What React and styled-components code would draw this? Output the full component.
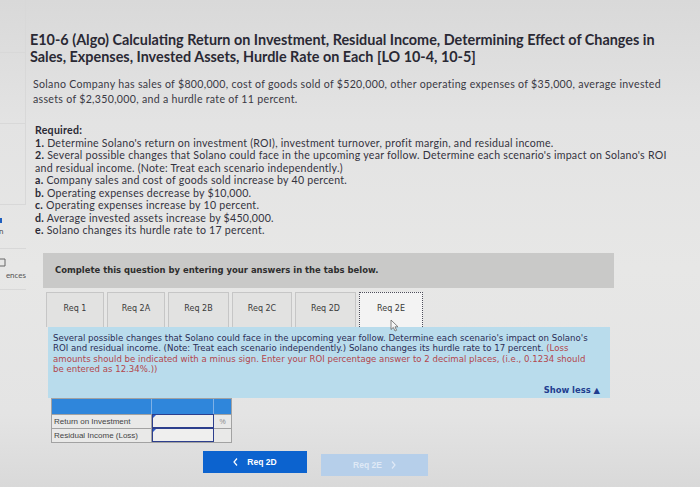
import styled, { createGlobalStyle, css } from 'styled-components';

const GlobalStyle = createGlobalStyle`
	html, body {
		margin: 0;
		padding: 0;
		background: #e2e2e2;
	}
	body {
		font-family: 'Lato', 'Liberation Sans', sans-serif;
	}
`;

const Page = styled.div`
	width: 700px;
	height: 487px;
	overflow: hidden;
	display: flex;
	background: linear-gradient(180deg, #d9d9d9 0%, #e3e3e3 25%, #e7e7e6 55%, #e4e4e4 85%, #d9d9d9 100%);
`;

const Sidebar = styled.div`
	width: 26px;
	flex-shrink: 0;
	display: flex;
	flex-direction: column;
`;

const SideCell = styled.div`
	height: ${(props) => props.h}px;
	border-bottom: 1px solid #d8d8d8;
	display: flex;
	flex-direction: column;
	align-items: flex-end;
	justify-content: center;
	gap: 3px;
	overflow: hidden;
	font-family: 'Lato', sans-serif;
	font-size: 8px;
	color: #555;
	white-space: nowrap;
	${(props) =>
		props.edge &&
		css`
			border-right: 1px solid #d8d8d8;
		`}
`;

const SideMark = styled.span`
	align-self: flex-start;
	width: 2px;
	height: 5px;
	background: #1f5fbf;
`;

const SideLabel = styled.span`
	align-self: flex-start;
	margin-left: -1px;
`;

const Main = styled.div`
	flex: 1;
	padding: 31px 0 0 4px;
	color: #2c2b36;
`;

const Title = styled.h1`
	margin: 0;
	font-family: 'Lato', sans-serif;
	font-weight: 700;
	font-size: 14.4px;
	line-height: 17px;
	color: #2a2934;
	white-space: nowrap;
`;

const Intro = styled.p`
	margin: 12px 0 0 3px;
	font-size: 10.6px;
	letter-spacing: 0.3px;
	line-height: 15px;
	color: #3a3944;
	white-space: nowrap;
`;

const Required = styled.div`
	margin: 17px 0 0 5px;
	font-size: 10.6px;
	letter-spacing: 0.25px;
	line-height: 12.5px;
	color: #34333e;
	white-space: nowrap;
`;

const Strong = styled.b`
	font-weight: 700;
	color: #2a2934;
`;

const Question = styled.div`
	margin: 16px 0 0 13px;
	width: 571px;
	font-family: 'DejaVu Sans', Verdana, sans-serif;
`;

const Instruction = styled.div`
	height: 35px;
	background: #c9c9c8;
	display: flex;
	align-items: center;
	padding-left: 12px;
	font-size: 8.45px;
	font-weight: 700;
	color: #2e2e2e;
`;

const Tabs = styled.div`
	margin-top: 4px;
	padding-left: 3px;
	display: flex;
	gap: 3px;
	height: 35px;
`;

const Tab = styled.div`
	position: relative;
	width: ${(props) => props.w}px;
	box-sizing: border-box;
	border: 1px solid #c6c6c6;
	border-bottom: none;
	background: #e2e2e1;
	display: flex;
	align-items: center;
	justify-content: center;
	padding-bottom: 3px;
	font-size: 8px;
	color: #3a3a3a;
	${(props) =>
		props.active &&
		css`
			background: #f3f3f3;
			border: 1px dotted #4d4d5a;
			border-bottom: none;
		`}
`;

const Cursor = styled.svg`
	position: absolute;
	left: 30px;
	top: 26px;
`;

const Panel = styled.div`
	margin: 0 4px 0 5px;
	background: #b9dcec;
	padding: 6px 8px 3px 5px;
	font-size: 8.6px;
	line-height: 10.5px;
	color: #2b2d55;
	white-space: nowrap;
`;

const Warn = styled.span`
	color: #b3474c;
`;

const ShowLess = styled.div`
	margin: 10px 2px 0 0;
	text-align: right;
	font-weight: 700;
	font-size: 8.4px;
	color: #213d8f;
`;

const Table = styled.div`
	margin-left: 8px;
	width: 179px;
	display: grid;
	grid-template-columns: 100px 62px 17px;
	border: 1px solid #a2a2a2;
	font-family: 'Liberation Sans', Arial, sans-serif;
	font-size: 8px;
	color: #3a3a3a;
`;

const HeadCell = styled.div`
	height: 15px;
	background: #2f86db;
	border-right: 1px solid #7fb1e6;
	&:nth-child(3) {
		border-right: none;
	}
`;

const Cell = styled.div`
	position: relative;
	height: 14px;
	box-sizing: border-box;
	border-top: 1px solid #a2a2a2;
	border-right: 1px solid #a2a2a2;
	background: #e9e9e8;
	display: flex;
	align-items: center;
	padding-left: 2px;
	color: #444;
	${(props) =>
		props.input &&
		css`
			background: #efefee;
			border: 1.5px solid #2d3f8d;
			&::before {
				content: '';
				position: absolute;
				left: 0;
				top: 0;
				border-top: 3px solid #2d5fc8;
				border-right: 3px solid transparent;
			}
		`}
	${(props) =>
		props.unit &&
		css`
			border-right: none;
			justify-content: center;
			padding-left: 0;
			font-size: 7px;
			color: #888;
		`}
`;

const NavRow = styled.div`
	margin: 8px 0 0 160px;
	display: flex;
	gap: 14px;
	align-items: flex-start;
`;

const NavButton = styled.div`
	height: 22px;
	width: ${(props) => props.w}px;
	background: ${(props) => (props.disabled ? '#b6cfea' : '#0c63cf')};
	color: ${(props) => (props.disabled ? '#dfe9f6' : '#ffffff')};
	display: flex;
	align-items: center;
	justify-content: center;
	gap: 9px;
	font-family: 'Liberation Sans', Arial, sans-serif;
	font-weight: 700;
	font-size: 8.5px;
	margin-top: ${(props) => (props.disabled ? 3 : 0)}px;
`;

const Chevron = ({ dir }) => (
	<svg width="5" height="8" viewBox="0 0 5 8">
		<polyline
			points={dir === 'left' ? '4,0.5 1,4 4,7.5' : '1,0.5 4,4 1,7.5'}
			fill="none"
			stroke="currentColor"
			strokeWidth="1.2"
		/>
	</svg>
);

const tabs = [
	{ label: 'Req 1', w: 58 },
	{ label: 'Req 2A', w: 58 },
	{ label: 'Req 2B', w: 61 },
	{ label: 'Req 2C', w: 60 },
	{ label: 'Req 2D', w: 61 },
	{ label: 'Req 2E', w: 64, active: true },
];

const items = [
	['a.', 'Company sales and cost of goods sold increase by 40 percent.'],
	['b.', 'Operating expenses decrease by $10,000.'],
	['c.', 'Operating expenses increase by 10 percent.'],
	['d.', 'Average invested assets increase by $450,000.'],
	['e.', 'Solano changes its hurdle rate to 17 percent.'],
];

const App = () => {
	return (
		<>
			<GlobalStyle />
			<Page>
				<Sidebar>
					<SideCell h={52} edge />
					<SideCell h={70} edge />
					<SideCell h={80} edge />
					<SideCell h={43}>
						<SideMark />
						<SideLabel>n</SideLabel>
					</SideCell>
					<SideCell h={40}>
						<svg width="8" height="9" viewBox="0 0 8 9" style={{ alignSelf: 'flex-start' }}>
							<path d="M0 1 H5 V8 H0" fill="none" stroke="#666" strokeWidth="1" />
						</svg>
						<span>ences</span>
					</SideCell>
				</Sidebar>
				<Main>
					<Title>
						E10-6 (Algo) Calculating Return on Investment, Residual Income, Determining Effect of Changes in
						<br />
						Sales, Expenses, Invested Assets, Hurdle Rate on Each [LO 10-4, 10-5]
					</Title>
					<Intro>
						Solano Company has sales of $800,000, cost of goods sold of $520,000, other operating expenses of $35,000, average invested
						<br />
						assets of $2,350,000, and a hurdle rate of 11 percent.
					</Intro>
					<Required>
						<Strong>Required:</Strong>
						<br />
						<Strong>1.</Strong> Determine Solano's return on investment (ROI), investment turnover, profit margin, and residual income.
						<br />
						<Strong>2.</Strong> Several possible changes that Solano could face in the upcoming year follow. Determine each scenario's impact on Solano's ROI
						<br />
						and residual income. (Note: Treat each scenario independently.)
						{items.map(([k, text]) => (
							<div key={k}>
								<Strong>{k}</Strong> {text}
							</div>
						))}
					</Required>
					<Question>
						<Instruction>Complete this question by entering your answers in the tabs below.</Instruction>
						<Tabs>
							{tabs.map((t) => (
								<Tab key={t.label} w={t.w} active={t.active}>
									{t.label}
									{t.active && (
										<Cursor width="9" height="13" viewBox="0 0 9 13">
											<path d="M1 1 L1 10.5 L3.3 8.4 L5 12 L6.6 11.3 L5 7.8 L8 7.8 Z" fill="#f6f6f6" stroke="#666" strokeWidth="0.8" />
										</Cursor>
									)}
								</Tab>
							))}
						</Tabs>
						<Panel>
							Several possible changes that Solano could face in the upcoming year follow. Determine each scenario's impact on Solano's
							<br />
							ROI and residual income. (Note: Treat each scenario independently.) Solano changes its hurdle rate to 17 percent.{' '}
							<Warn>
								(Loss
								<br />
								amounts should be indicated with a minus sign. Enter your ROI percentage answer to 2 decimal places, (i.e., 0.1234 should
								<br />
								be entered as 12.34%.))
							</Warn>
							<ShowLess>Show less ▲</ShowLess>
						</Panel>
						<Table>
							<HeadCell />
							<HeadCell />
							<HeadCell />
							<Cell>Return on Investment</Cell>
							<Cell input />
							<Cell unit>%</Cell>
							<Cell>Residual Income (Loss)</Cell>
							<Cell input />
							<Cell unit />
						</Table>
						<NavRow>
							<NavButton w={104}>
								<Chevron dir="left" />
								Req 2D
							</NavButton>
							<NavButton w={107} disabled>
								Req 2E
								<Chevron dir="right" />
							</NavButton>
						</NavRow>
					</Question>
				</Main>
			</Page>
		</>
	);
};

export default App;
